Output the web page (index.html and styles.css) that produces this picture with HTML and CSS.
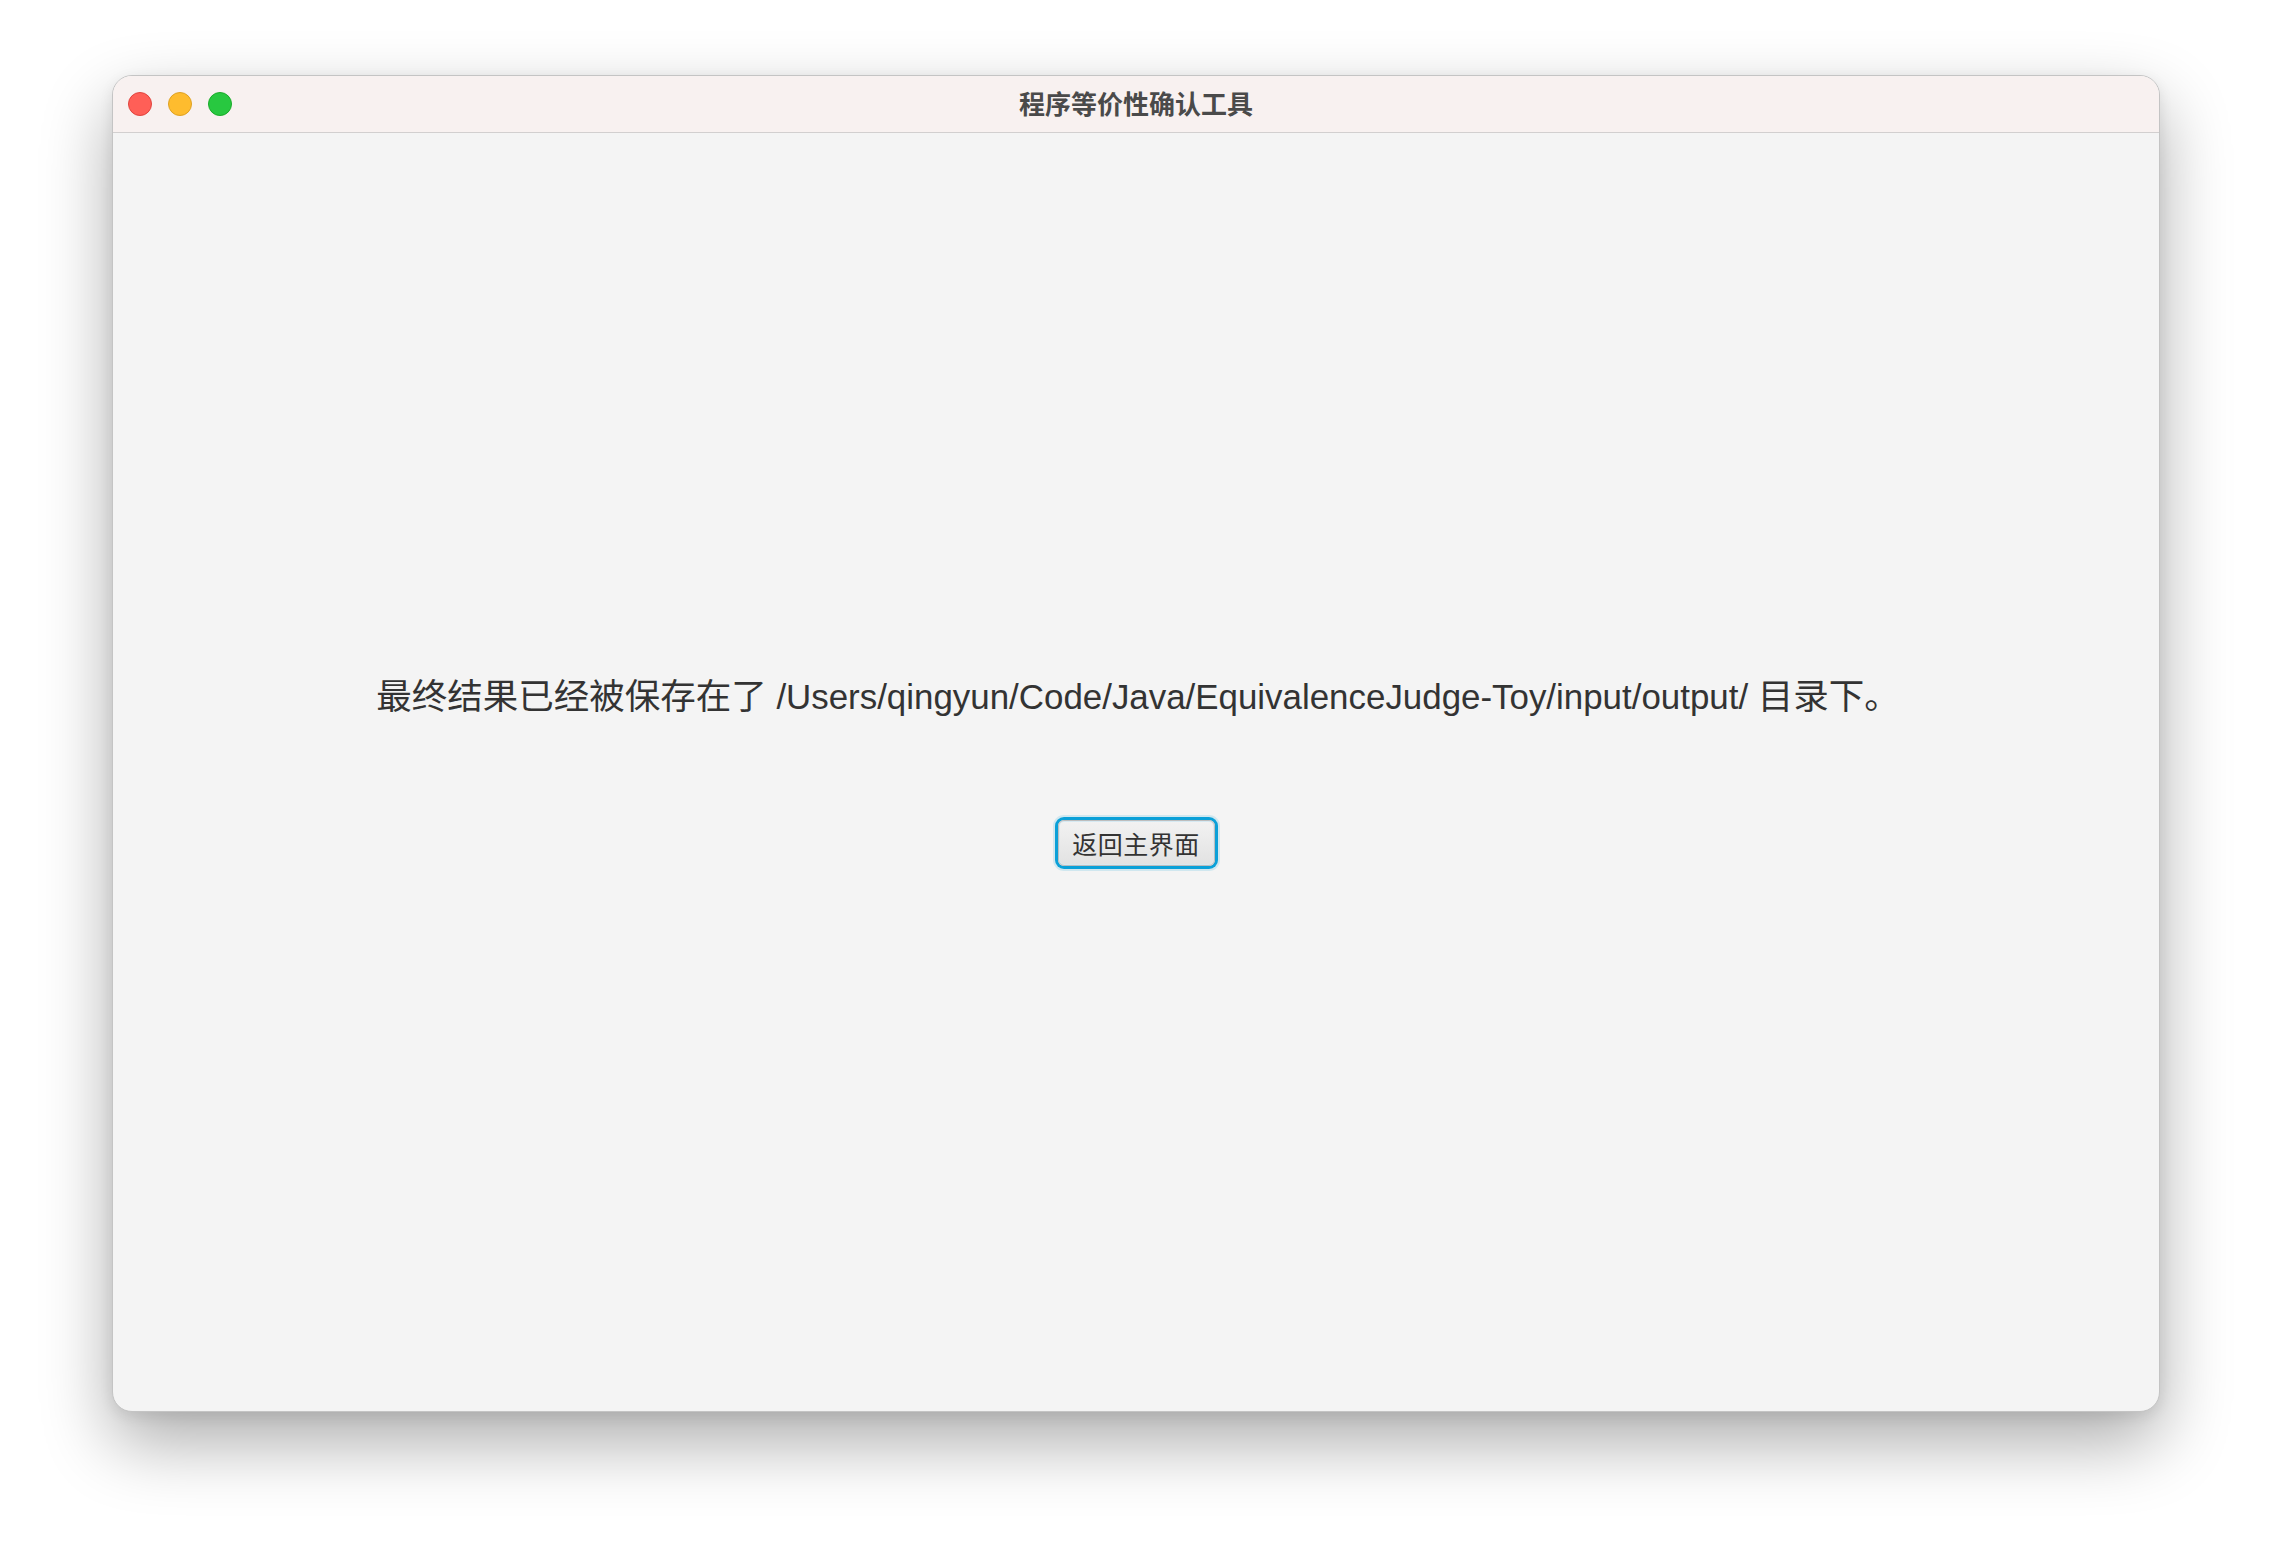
FILE: index.html
```html
<!DOCTYPE html>
<html lang="zh-CN">
<head>
<meta charset="utf-8">
<title>程序等价性确认工具</title>
<link rel="stylesheet" href="styles.css">
</head>
<body>
<div class="window">
  <div class="titlebar">
    <div class="lights">
      <span class="light close"></span>
      <span class="light minimize"></span>
      <span class="light zoom"></span>
    </div>
    <div class="title">程序等价性确认工具</div>
  </div>
  <div class="content">
    <p class="message"><span class="cjk">最终结果已经被保存在了</span> <span class="path">/Users/qingyun/Code/Java/EquivalenceJudge-Toy/input/output/</span> <span class="cjk">目录下。</span></p>
    <button class="btn" type="button">返回主界面</button>
  </div>
</div>
</body>
</html>
```
FILE: styles.css
```css
html, body {
  margin: 0;
  padding: 0;
  background: #ffffff;
}

body {
  width: 2272px;
  height: 1560px;
  overflow: hidden;
  font-family: "Liberation Sans", "Noto Sans CJK SC", sans-serif;
}

.window {
  margin: 75px 0 0 112px;
  width: 2048px;
  height: 1337px;
  box-sizing: border-box;
  border: 1px solid #c4c4c4;
  border-radius: 20px;
  overflow: hidden;
  display: flex;
  flex-direction: column;
  background: #f4f4f4;
  box-shadow: 0 30px 70px rgba(0, 0, 0, 0.33), 0 4px 14px rgba(0, 0, 0, 0.08);
}

.titlebar {
  height: 56px;
  flex: 0 0 auto;
  background: #f8f1f0;
  border-bottom: 1px solid #d2cfcf;
  position: relative;
  display: flex;
  align-items: center;
  justify-content: center;
}

.lights {
  position: absolute;
  left: 15px;
  top: 16px;
  display: flex;
  gap: 16px;
}

.light {
  width: 24px;
  height: 24px;
  box-sizing: border-box;
  border-radius: 50%;
  display: block;
}

.close {
  background: #ff5f57;
  border: 1px solid #e0443e;
}

.minimize {
  background: #febc2e;
  border: 1px solid #dea123;
}

.zoom {
  background: #28c840;
  border: 1px solid #1aab29;
}

.title {
  font-family: "Noto Sans CJK SC", sans-serif;
  font-weight: 700;
  font-size: 26px;
  color: #4a4a4a;
  line-height: 30px;
  margin-top: -2px;
}

.content {
  flex: 1 1 auto;
  display: flex;
  flex-direction: column;
  align-items: center;
  justify-content: center;
  gap: 102px;
  padding-bottom: 6px;
}

.message {
  margin: 0 0 0 4px;
  font-family: "Liberation Sans", "Noto Sans CJK SC", sans-serif;
  font-size: 34.5px;
  line-height: 42px;
  color: #333333;
  white-space: nowrap;
}

.cjk {
  font-family: "Noto Sans CJK SC", sans-serif;
  font-size: 35.5px;
}

.path {
  font-family: "Liberation Sans", sans-serif;
  font-size: 34.9px;
}

.btn {
  font-family: "Noto Sans CJK SC", sans-serif;
  font-size: 25px;
  color: #333333;
  line-height: 30px;
  padding: 0;
  width: 157px;
  height: 46px;
  box-sizing: border-box;
  white-space: nowrap;
  background: linear-gradient(#f2f2f2, #e2e2e2);
  border: 1px solid #bdbdbd;
  border-radius: 6px;
  box-shadow: 0 0 0 1px #d6e9f2 inset, 0 0 0 3px #0aa0d8, 0 0 0 5px rgba(10, 160, 216, 0.15);
  letter-spacing: 0.5px;
  display: flex;
  align-items: center;
  justify-content: center;
}
```
